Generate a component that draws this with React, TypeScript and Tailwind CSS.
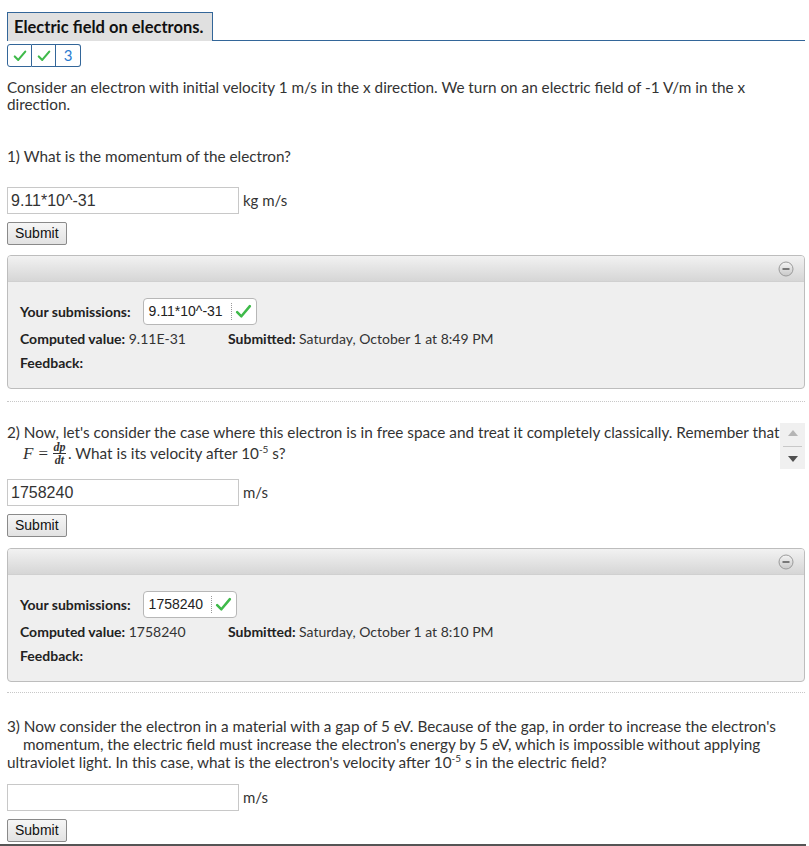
import React from "react";

const Check = ({ size = 14 }: { size?: number }) => (
  <svg width={size} height={size} viewBox="0 0 16 16">
    <path d="M2 8.5 L6 12.5 L14 3" fill="none" stroke="#3fba4a" strokeWidth="2.4" strokeLinecap="round" strokeLinejoin="round" />
  </svg>
);

const MinusCircle = () => (
  <svg width="16" height="16" viewBox="0 0 16 16">
    <defs>
      <linearGradient id="mg" x1="0" y1="0" x2="0" y2="1">
        <stop offset="0" stopColor="#f4f4f4" />
        <stop offset="1" stopColor="#c8c8c8" />
      </linearGradient>
    </defs>
    <circle cx="8" cy="8" r="7" fill="url(#mg)" stroke="#9a9a9a" strokeWidth="1" />
    <rect x="4.5" y="7" width="7" height="2" fill="#777" />
  </svg>
);

function Panel({ value, computed, submitted }: { value: string; computed: string; submitted: string }) {
  return (
    <div className="ml-[7px] mr-[4px] rounded-[4px] border border-[#bdbdbd] bg-[#efefef] overflow-hidden">
      <div className="h-[26px] border-b border-[#d0d0d0] bg-gradient-to-b from-[#f2f2f2] to-[#d6d6d6] flex items-center justify-end pr-[10px]">
        <MinusCircle />
      </div>
      <div className="px-[12px] pt-[16px] pb-[17px] text-[14px] leading-[17px]">
        <div className="flex items-center gap-[12px]">
          <span className="font-bold text-[#222]">Your submissions:</span>
          <span className="inline-flex items-center h-[27px] bg-white border border-[#b7b7b7] rounded-[4px] pl-[5px] pr-[4px] text-[14px] font-['Liberation_Sans',sans-serif] text-[#222]">
            {value}
            <span className="ml-[8px] mr-[3px] h-[17px] border-l border-dotted border-[#999]"></span>
            <Check size={17} />
          </span>
        </div>
        <div className="flex mt-[5px] h-[17px]">
          <span className="w-[208px]"><b className="text-[#222]">Computed value:</b> <span className="text-[#333]">{computed}</span></span>
          <span><b className="text-[#222]">Submitted:</b> <span className="text-[#333]">Saturday, October 1 at {submitted}</span></span>
        </div>
        <div className="mt-[7px] font-bold text-[#222]">Feedback:</div>
      </div>
    </div>
  );
}

function AnswerRow({ value, unit }: { value: string; unit: string }) {
  return (
    <div className="px-[7px]">
      <div className="flex items-center gap-[4px]">
        <div className="w-[232px] h-[27px] border border-[#c8c8c8] bg-white flex items-center pl-[3px] text-[16px] text-[#333] font-['Liberation_Sans',sans-serif]">
          {value}
        </div>
        <span className="text-[15px] text-[#333]">{unit}</span>
      </div>
      <button className="mt-[8px] h-[23px] px-[7px] border border-[#8a8a8a] rounded-[2px] bg-gradient-to-b from-[#f6f6f6] to-[#e2e2e2] text-[14px] text-[#111] font-['Liberation_Sans',sans-serif] flex items-center">
        Submit
      </button>
    </div>
  );
}

const Sup = () => <sup className="text-[10px] relative -top-[6px] align-baseline">-5</sup>;

export default function App() {
  return (
    <div className="w-[809px] h-[846px] bg-white overflow-hidden font-['Lato',sans-serif] text-[#333] relative">
      <div className="pt-[12px] pl-[7px] pr-[4px]">
        <div className="flex items-end border-b border-[#336699]">
          <div className="h-[29px] w-[206px] bg-[#e0e0e0] border border-b-0 border-[#336699] flex items-center pl-[6px] text-[16.5px] font-bold text-[#111] -mb-px">
            Electric field on electrons.
          </div>
        </div>
      </div>
      <div className="pl-[7px] mt-[3px] flex">
        <div className="w-[25px] h-[23px] border border-[#336699] rounded-l-[3px] flex items-center justify-center bg-white"><Check /></div>
        <div className="w-[24px] h-[23px] border border-l-0 border-[#336699] flex items-center justify-center bg-white"><Check /></div>
        <div className="w-[25px] h-[23px] border border-l-0 border-[#336699] rounded-r-[3px] flex items-center justify-center bg-white text-[15px] text-[#2a7bd0]">3</div>
      </div>
      <p className="px-[7px] mt-[12px] text-[15.3px] leading-[17px]">
        Consider an electron with initial velocity 1 m/s in the x direction. We turn on an electric field of -1 V/m in the x<br />direction.
      </p>
      <p className="px-[7px] mt-[35px] text-[15.3px] leading-[17px]">1) What is the momentum of the electron?</p>
      <div className="mt-[22px]">
        <AnswerRow value="9.11*10^-31" unit="kg m/s" />
      </div>
      <div className="mt-[10px]">
        <Panel value="9.11*10^-31" computed="9.11E-31" submitted="8:49 PM" />
      </div>
      <div className="ml-[7px] mr-[4px] mt-[12px] border-t border-dotted border-[#c8c8c8]" />
      <div className="relative mt-[21px] px-[7px] text-[15.3px] leading-[19px] pr-[30px]">
        <div className="whitespace-nowrap">2) Now, let's consider the case where this electron is in free space and treat it completely classically. Remember that</div>
        <div className="pl-[16px] flex items-center h-[22px]">
          <span className="font-['Liberation_Serif',serif] italic text-[17px]">F</span>
          <span className="mx-[5px] font-['Liberation_Serif',serif] text-[17px]">=</span>
          <span className="inline-flex flex-col items-center leading-[10px] font-['Liberation_Serif',serif] italic text-[12px] font-bold mr-[2px]">
            <span>dp</span>
            <span className="w-[13px] border-t border-[#333] my-[1px]" />
            <span>dt</span>
          </span>
          <span>. What is its velocity after 10<Sup /> s?</span>
        </div>
        <div className="absolute right-[4px] top-[0px] w-[25px] h-[46px] bg-[#f0f0f0] flex flex-col items-center justify-between py-[7px]">
          <svg width="10" height="6" viewBox="0 0 10 6"><path d="M0 6 L5 0 L10 6 Z" fill="#b5b5b5" /></svg>
          <div className="w-[19px] border-t border-[#c8c8c8]" />
          <svg width="10" height="6" viewBox="0 0 10 6"><path d="M0 0 L5 6 L10 0 Z" fill="#505050" /></svg>
        </div>
      </div>
      <div className="mt-[15px]">
        <AnswerRow value="1758240" unit="m/s" />
      </div>
      <div className="mt-[11px]">
        <Panel value="1758240" computed="1758240" submitted="8:10 PM" />
      </div>
      <div className="ml-[7px] mr-[4px] mt-[10px] border-t border-dotted border-[#c8c8c8]" />
      <div className="mt-[24px] px-[7px] text-[15.3px] leading-[18px]">
        <div className="whitespace-nowrap">3) Now consider the electron in a material with a gap of 5 eV. Because of the gap, in order to increase the electron's</div>
        <div className="pl-[16px] whitespace-nowrap">momentum, the electric field must increase the electron's energy by 5 eV, which is impossible without applying</div>
        <div className="whitespace-nowrap">ultraviolet light. In this case, what is the electron's velocity after 10<Sup /> s in the electric field?</div>
      </div>
      <div className="mt-[13px]">
        <AnswerRow value="" unit="m/s" />
      </div>
      <div className="absolute left-0 bottom-0 w-[806px] h-[2px] bg-[#555]" />
    </div>
  );
}
